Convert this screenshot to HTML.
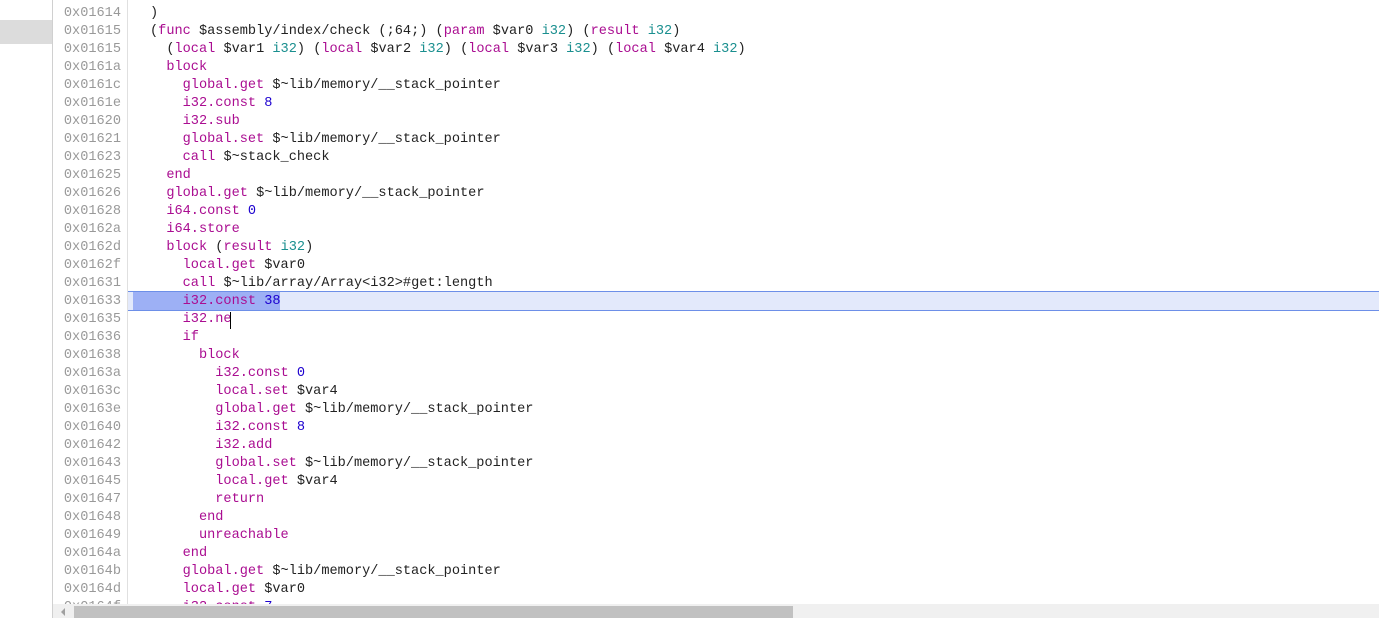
<!DOCTYPE html><html><head><style>
body{margin:0;width:1379px;height:618px;overflow:hidden;background:#fff;position:relative;font-family:"Liberation Mono",monospace;font-size:13.6px;}
#side{position:absolute;left:0;top:0;width:52px;height:618px;border-right:1px solid #d0d0d0;background:#fff}
#side .b{position:absolute;left:0;top:20px;width:52px;height:24px;background:#dcdcdc}
#gut{position:absolute;left:53px;top:0;width:74px;height:604px;border-right:1px solid #e0e0e0}
.row{position:absolute;left:0;height:18px;line-height:18px;white-space:pre;transform:translateY(2px)}
.ln{left:53px;width:68px;text-align:right;color:#999}
.cd{left:150px;color:#222}
.k{color:#aa0d91}.n{color:#1c00cf}.t{color:#1a8f8f}
#hl{position:absolute;left:128px;top:291px;width:1251px;height:18px;background:#e3e9fb;border-top:1px solid #6d8fe8;border-bottom:1px solid #6d8fe8}
#sel{position:absolute;left:133px;top:292px;width:147px;height:18px;background:#9db0f5}
#cur{position:absolute;left:230px;top:312px;width:1px;height:17px;background:#000}
#sb{position:absolute;left:53px;top:604px;width:1326px;height:14px;background:#f0f0f0}
#th{position:absolute;left:74px;top:606px;width:719px;height:12px;background:#c1c1c1}
#ar{position:absolute;left:61px;top:608px;width:0;height:0;border-top:4px solid transparent;border-bottom:4px solid transparent;border-right:4px solid #a0a0a0}
</style></head><body>
<div id="side"><div class="b"></div></div>
<div id="gut"></div>
<div id="hl"></div><div id="sel"></div>
<div class="row ln" style="top:3px">0x01614</div><div class="row cd" style="top:3px">)</div>
<div class="row ln" style="top:21px">0x01615</div><div class="row cd" style="top:21px">(<span class="k">func</span> $assembly/index/check (;64;) (<span class="k">param</span> $var0 <span class="t">i32</span>) (<span class="k">result</span> <span class="t">i32</span>)</div>
<div class="row ln" style="top:39px">0x01615</div><div class="row cd" style="top:39px">  (<span class="k">local</span> $var1 <span class="t">i32</span>) (<span class="k">local</span> $var2 <span class="t">i32</span>) (<span class="k">local</span> $var3 <span class="t">i32</span>) (<span class="k">local</span> $var4 <span class="t">i32</span>)</div>
<div class="row ln" style="top:57px">0x0161a</div><div class="row cd" style="top:57px">  <span class="k">block</span></div>
<div class="row ln" style="top:75px">0x0161c</div><div class="row cd" style="top:75px">    <span class="k">global.get</span> $~lib/memory/__stack_pointer</div>
<div class="row ln" style="top:93px">0x0161e</div><div class="row cd" style="top:93px">    <span class="k">i32.const</span> <span class="n">8</span></div>
<div class="row ln" style="top:111px">0x01620</div><div class="row cd" style="top:111px">    <span class="k">i32.sub</span></div>
<div class="row ln" style="top:129px">0x01621</div><div class="row cd" style="top:129px">    <span class="k">global.set</span> $~lib/memory/__stack_pointer</div>
<div class="row ln" style="top:147px">0x01623</div><div class="row cd" style="top:147px">    <span class="k">call</span> $~stack_check</div>
<div class="row ln" style="top:165px">0x01625</div><div class="row cd" style="top:165px">  <span class="k">end</span></div>
<div class="row ln" style="top:183px">0x01626</div><div class="row cd" style="top:183px">  <span class="k">global.get</span> $~lib/memory/__stack_pointer</div>
<div class="row ln" style="top:201px">0x01628</div><div class="row cd" style="top:201px">  <span class="k">i64.const</span> <span class="n">0</span></div>
<div class="row ln" style="top:219px">0x0162a</div><div class="row cd" style="top:219px">  <span class="k">i64.store</span></div>
<div class="row ln" style="top:237px">0x0162d</div><div class="row cd" style="top:237px">  <span class="k">block</span> (<span class="k">result</span> <span class="t">i32</span>)</div>
<div class="row ln" style="top:255px">0x0162f</div><div class="row cd" style="top:255px">    <span class="k">local.get</span> $var0</div>
<div class="row ln" style="top:273px">0x01631</div><div class="row cd" style="top:273px">    <span class="k">call</span> $~lib/array/Array&lt;i32&gt;#get:length</div>
<div class="row ln" style="top:291px">0x01633</div><div class="row cd" style="top:291px">    <span class="k">i32.const</span> <span class="n">38</span></div>
<div class="row ln" style="top:309px">0x01635</div><div class="row cd" style="top:309px">    <span class="k">i32.ne</span></div>
<div class="row ln" style="top:327px">0x01636</div><div class="row cd" style="top:327px">    <span class="k">if</span></div>
<div class="row ln" style="top:345px">0x01638</div><div class="row cd" style="top:345px">      <span class="k">block</span></div>
<div class="row ln" style="top:363px">0x0163a</div><div class="row cd" style="top:363px">        <span class="k">i32.const</span> <span class="n">0</span></div>
<div class="row ln" style="top:381px">0x0163c</div><div class="row cd" style="top:381px">        <span class="k">local.set</span> $var4</div>
<div class="row ln" style="top:399px">0x0163e</div><div class="row cd" style="top:399px">        <span class="k">global.get</span> $~lib/memory/__stack_pointer</div>
<div class="row ln" style="top:417px">0x01640</div><div class="row cd" style="top:417px">        <span class="k">i32.const</span> <span class="n">8</span></div>
<div class="row ln" style="top:435px">0x01642</div><div class="row cd" style="top:435px">        <span class="k">i32.add</span></div>
<div class="row ln" style="top:453px">0x01643</div><div class="row cd" style="top:453px">        <span class="k">global.set</span> $~lib/memory/__stack_pointer</div>
<div class="row ln" style="top:471px">0x01645</div><div class="row cd" style="top:471px">        <span class="k">local.get</span> $var4</div>
<div class="row ln" style="top:489px">0x01647</div><div class="row cd" style="top:489px">        <span class="k">return</span></div>
<div class="row ln" style="top:507px">0x01648</div><div class="row cd" style="top:507px">      <span class="k">end</span></div>
<div class="row ln" style="top:525px">0x01649</div><div class="row cd" style="top:525px">      <span class="k">unreachable</span></div>
<div class="row ln" style="top:543px">0x0164a</div><div class="row cd" style="top:543px">    <span class="k">end</span></div>
<div class="row ln" style="top:561px">0x0164b</div><div class="row cd" style="top:561px">    <span class="k">global.get</span> $~lib/memory/__stack_pointer</div>
<div class="row ln" style="top:579px">0x0164d</div><div class="row cd" style="top:579px">    <span class="k">local.get</span> $var0</div>
<div class="row ln" style="top:597px">0x0164f</div><div class="row cd" style="top:597px">    <span class="k">i32.const</span> <span class="n">7</span></div>
<div id="cur"></div>
<div id="sb"></div><div id="th"></div><div id="ar"></div>
</body></html>
